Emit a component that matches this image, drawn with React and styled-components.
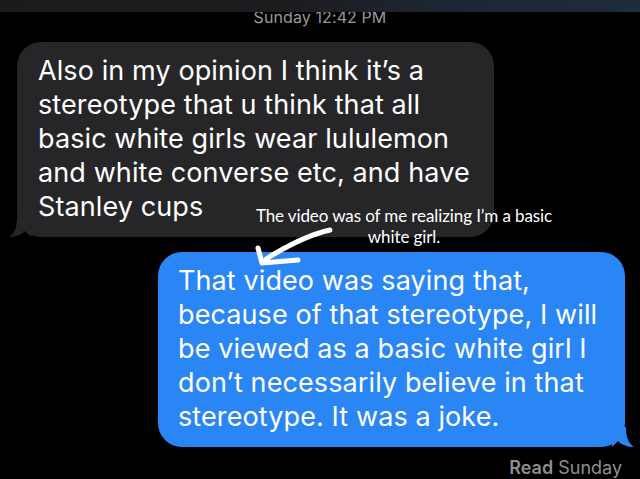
import React from 'react'
import styled, { createGlobalStyle } from 'styled-components'

const Global = createGlobalStyle`
  html, body { margin: 0; padding: 0; background: #000; }
  body { width: 640px; height: 479px; overflow: hidden; font-family: Inter, "Liberation Sans", sans-serif; }
`

const Screen = styled.div`
  position: relative;
  width: 640px;
  height: 479px;
  background: #000;
  display: flex;
  flex-direction: column;
`

const StatusStrip = styled.div`
  position: relative;
  z-index: 2;
  height: 12px;
  background: linear-gradient(90deg, #1b1b1d 0%, #1c1c1f 45%, #1d2633 70%, #1f2c3b 100%);
`

const Stamp = styled.div`
  margin-top: -6px;
  height: 28px;
  text-align: center;
  color: #98989d;
  font-size: 16px;
  line-height: 22px;
  letter-spacing: 0.1px;
`

const Bubble = styled.div`
  position: relative;
  box-sizing: border-box;
  align-self: ${p => (p.$sent ? 'flex-end' : 'flex-start')};
  margin: ${p => (p.$sent ? '15px 15px 0 0' : '9px 0 0 17px')};
  width: ${p => (p.$sent ? '467px' : '477px')};
  padding: 12px 10px 13px ${p => (p.$sent ? '20px' : '21px')};
  border-radius: 24px;
  background: ${p => (p.$sent ? '#2a86f4' : '#262628')};
  color: #fff;
  font-size: 27px;
  line-height: 34px;
  letter-spacing: 0.1px;
  white-space: nowrap;
`

const Tail = styled.svg`
  position: absolute;
  bottom: 0;
  ${p => (p.$sent ? 'right: -9px;' : 'left: -8px;')}
  width: 22px;
  height: 20px;
`

const Receipt = styled.div`
  align-self: flex-end;
  margin: 10px 18px 0 0;
  color: #8e8e93;
  font-size: 18px;
  line-height: 22px;
  b { font-weight: 600; }
`

const Note = styled.div`
  position: absolute;
  left: 234px;
  top: 205px;
  width: 340px;
  text-align: center;
  color: #fff;
  font-family: Lato, "Open Sans", sans-serif;
  font-size: 17px;
  line-height: 21px;
  letter-spacing: -0.1px;
`

const Arrow = styled.svg`
  position: absolute;
  left: 250px;
  top: 222px;
  width: 90px;
  height: 50px;
`

export default function App() {
  return (
    <>
      <Global />
      <Screen>
        <StatusStrip />
        <Stamp>Sunday 12:42 PM</Stamp>
        <Bubble>
          Also in my opinion I think it’s a<br />
          stereotype that u think that all<br />
          basic white girls wear lululemon<br />
          and white converse etc, and have<br />
          Stanley cups
          <Tail viewBox="0 0 22 20">
            <path d="M8 0 C8 10 6 16 0 20 C6 20 12 18 16 14 L22 20 L22 0 Z" fill="#262628" />
          </Tail>
        </Bubble>
        <Bubble $sent>
          That video was saying that,<br />
          because of that stereotype, I will<br />
          be viewed as a basic white girl I<br />
          don’t necessarily believe in that<br />
          stereotype. It was a joke.
          <Tail $sent viewBox="0 0 22 20">
            <path d="M14 0 C14 10 16 16 22 20 C16 20 10 18 6 14 L0 20 L0 0 Z" fill="#2a86f4" />
          </Tail>
        </Bubble>
        <Receipt><b>Read</b> Sunday</Receipt>
        <Note>The video was of me realizing I’m a basic<br />white girl.</Note>
        <Arrow viewBox="0 0 90 50">
          <path d="M80 8 C62 12 40 22 16 37" stroke="#fff" strokeWidth="5" fill="none" strokeLinecap="round" />
          <path d="M8 26 L12 41 L48 38" stroke="#fff" strokeWidth="5" fill="none" strokeLinecap="round" strokeLinejoin="round" />
        </Arrow>
      </Screen>
    </>
  )
}
